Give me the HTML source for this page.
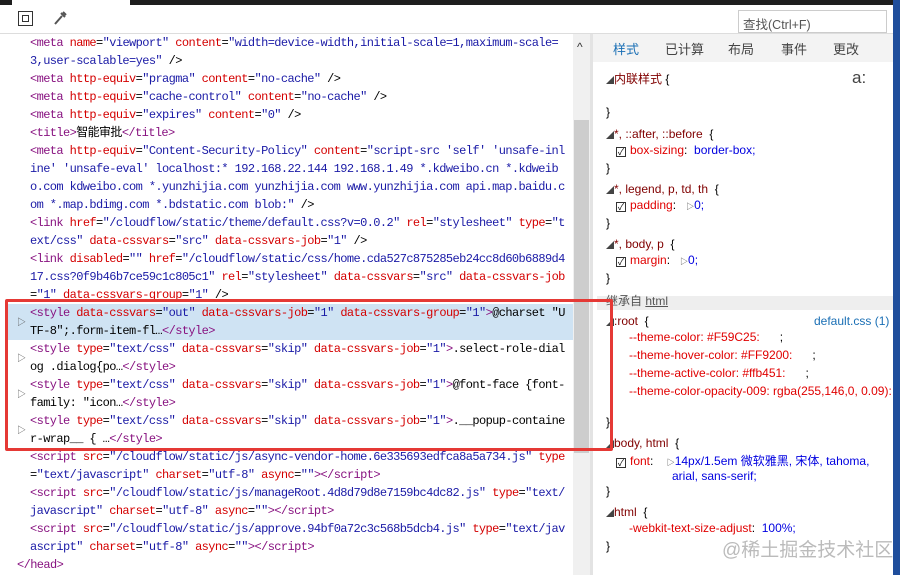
<!DOCTYPE html>
<html><head><meta charset="utf-8"><style>
*{margin:0;padding:0;box-sizing:border-box}
body{width:900px;height:575px;overflow:hidden;background:#fff;position:relative;font-family:"Liberation Sans","Noto Sans CJK SC",sans-serif}
.a{position:absolute;white-space:pre}
.code{font-family:"Liberation Mono","Noto Sans CJK SC",monospace;font-size:12px;letter-spacing:-0.6px;color:#000;line-height:18px}
.t{color:#881280}.n{color:#d40000}.v{color:#1a1aa6}
.r{font-size:12px;line-height:16px}
.sel{color:#800000}.p{color:#e00000}.pv{color:#0000e0}
.cb{display:inline-block;width:10px;height:10px;border:1px solid #333;vertical-align:-1px;margin-right:4px;font-size:9px;line-height:8px;text-align:center}
.tri{font-size:8px;color:#444}
</style></head><body>
<div class="a" style="left:0;top:0;width:900px;height:5px;background:#1e1e1e"></div>
<div class="a" style="left:12px;top:0;width:118px;height:5px;background:#fff"></div>
<div class="a" style="left:893px;top:0;width:7px;height:575px;background:#1f4e9c"></div>
<div class="a" style="left:18px;top:11px;width:15px;height:15px;border:1px solid #333"></div>
<div class="a" style="left:22px;top:15px;width:7px;height:7px;border:1px solid #333"></div>
<svg class="a" style="left:53px;top:10px" width="14" height="16"><path d="M2 14 L9 6 M8 3 L12 7 M10 2 L13 5" stroke="#555" stroke-width="2" fill="none"/></svg>
<div class="a" style="left:738px;top:10px;width:149px;height:23px;border:1px solid #ccc;font-size:12.5px;color:#555;padding:3px 4px">查找(Ctrl+F)</div>
<div class="a" style="left:0;top:33px;width:893px;height:1px;background:#ddd"></div>
<div class="a" style="left:573px;top:34px;width:17px;height:541px;background:#f0f0f0"></div>
<div class="a" style="left:574px;top:120px;width:15px;height:333px;background:#cdcdcd"></div>
<div class="a" style="left:577px;top:40px;font-size:12px;color:#333">^</div>
<div class="a" style="left:590px;top:34px;width:3px;height:541px;background:#e3e3e3"></div>
<div class="a" style="left:593px;top:34px;width:300px;height:28px;background:#f3f3f3"></div>
<div class="a r" style="left:613px;top:42px;font-size:13px;color:#1a6fb5">样式</div>
<div class="a r" style="left:665px;top:42px;font-size:13px;color:#444">已计算</div>
<div class="a r" style="left:728px;top:42px;font-size:13px;color:#444">布局</div>
<div class="a r" style="left:781px;top:42px;font-size:13px;color:#444">事件</div>
<div class="a r" style="left:833px;top:42px;font-size:13px;color:#444">更改</div>
<div class="a" style="left:852px;top:68px;font-size:17px;color:#444">a:</div>
<div class="a" style="left:597px;top:296px;width:296px;height:14px;background:#eee"></div>
<div class="a r" style="left:606px;top:293px;color:#555">继承自 <u>html</u></div>

<div class="a r" style="left:606px;top:71px"><span class="tri">◢</span><span class="sel">内联样式</span> {</div>
<div class="a r" style="left:606px;top:104px">}</div>
<div class="a r" style="left:606px;top:126px"><span class="tri">◢</span><span class="sel">*, ::after, ::before</span>  {</div>
<div class="a r" style="left:616px;top:142px"><span class="cb">✓</span><span class="p">box-sizing</span>:  <span class="pv">border-box;</span></div>
<div class="a r" style="left:606px;top:160px">}</div>
<div class="a r" style="left:606px;top:181px"><span class="tri">◢</span><span class="sel">*, legend, p, td, th</span>  {</div>
<div class="a r" style="left:616px;top:197px"><span class="cb">✓</span><span class="p">padding</span>:   <span class="tri">▷</span><span class="pv">0;</span></div>
<div class="a r" style="left:606px;top:215px">}</div>
<div class="a r" style="left:606px;top:236px"><span class="tri">◢</span><span class="sel">*, body, p</span>  {</div>
<div class="a r" style="left:616px;top:252px"><span class="cb">✓</span><span class="p">margin</span>:   <span class="tri">▷</span><span class="pv">0;</span></div>
<div class="a r" style="left:606px;top:270px">}</div>

<div class="a r" style="left:606px;top:313px"><span class="tri">◢</span><span class="sel">:root</span>  {</div>
<div class="a r" style="left:814px;top:313px;color:#1a6fb5">default.css (1)</div>
<div class="a r" style="left:629px;top:329px"><span class="p">--theme-color: #F59C25:</span>      ;</div>
<div class="a r" style="left:629px;top:347px"><span class="p">--theme-hover-color: #FF9200:</span>      ;</div>
<div class="a r" style="left:629px;top:365px"><span class="p">--theme-active-color: #ffb451:</span>      ;</div>
<div class="a r" style="left:629px;top:383px"><span class="p">--theme-color-opacity-009: rgba(255,146,0, 0.09):</span></div>
<div class="a r" style="left:606px;top:414px">}</div>
<div class="a r" style="left:606px;top:435px"><span class="tri">◢</span><span class="sel">body, html</span>  {</div>
<div class="a r" style="left:616px;top:453px"><span class="cb">✓</span><span class="p">font</span>:    <span class="tri">▷</span><span class="pv">14px/1.5em 微软雅黑, 宋体, tahoma,</span></div>
<div class="a r" style="left:672px;top:468px;color:#0000e0">arial, sans-serif;</div>
<div class="a r" style="left:606px;top:483px">}</div>
<div class="a r" style="left:606px;top:504px"><span class="tri">◢</span><span class="sel">html</span>  {</div>
<div class="a r" style="left:629px;top:520px"><span class="p">-webkit-text-size-adjust</span>:  <span class="pv">100%;</span></div>
<div class="a r" style="left:606px;top:538px">}</div>
<div class="a" style="left:722px;top:535px;font-size:19px;color:#bbb">@稀土掘金技术社区</div>

<div class="a" style="left:5px;top:304px;width:568px;height:36px;background:#cfe3f3"></div>
<div class="a code" style="left:30px;top:34px"><span class="t">&lt;meta</span> <span class="n">name</span>=<span class="v">"viewport"</span> <span class="n">content</span>=<span class="v">"width=device-width,initial-scale=1,maximum-scale=</span>
<span class="v">3,user-scalable=yes"</span> /&gt;
<span class="t">&lt;meta</span> <span class="n">http-equiv</span>=<span class="v">"pragma"</span> <span class="n">content</span>=<span class="v">"no-cache"</span> /&gt;
<span class="t">&lt;meta</span> <span class="n">http-equiv</span>=<span class="v">"cache-control"</span> <span class="n">content</span>=<span class="v">"no-cache"</span> /&gt;
<span class="t">&lt;meta</span> <span class="n">http-equiv</span>=<span class="v">"expires"</span> <span class="n">content</span>=<span class="v">"0"</span> /&gt;
<span class="t">&lt;title&gt;</span>智能审批<span class="t">&lt;/title&gt;</span>
<span class="t">&lt;meta</span> <span class="n">http-equiv</span>=<span class="v">"Content-Security-Policy"</span> <span class="n">content</span>=<span class="v">"script-src 'self' 'unsafe-inl</span>
<span class="v">ine' 'unsafe-eval' localhost:* 192.168.22.144 192.168.1.49 *.kdweibo.cn *.kdweib</span>
<span class="v">o.com kdweibo.com *.yunzhijia.com yunzhijia.com www.yunzhijia.com api.map.baidu.c</span>
<span class="v">om *.map.bdimg.com *.bdstatic.com blob:"</span> /&gt;
<span class="t">&lt;link</span> <span class="n">href</span>=<span class="v">"/cloudflow/static/theme/default.css?v=0.0.2"</span> <span class="n">rel</span>=<span class="v">"stylesheet"</span> <span class="n">type</span>=<span class="v">"t</span>
<span class="v">ext/css"</span> <span class="n">data-cssvars</span>=<span class="v">"src"</span> <span class="n">data-cssvars-job</span>=<span class="v">"1"</span> /&gt;
<span class="t">&lt;link</span> <span class="n">disabled</span>=<span class="v">""</span> <span class="n">href</span>=<span class="v">"/cloudflow/static/css/home.cda527c875285eb24cc8d60b6889d4</span>
<span class="v">17.css?0f9b46b7ce59c1c805c1"</span> <span class="n">rel</span>=<span class="v">"stylesheet"</span> <span class="n">data-cssvars</span>=<span class="v">"src"</span> <span class="n">data-cssvars-job</span>
=<span class="v">"1"</span> <span class="n">data-cssvars-group</span>=<span class="v">"1"</span> /&gt;
<span class="t">&lt;style</span> <span class="n">data-cssvars</span>=<span class="v">"out"</span> <span class="n">data-cssvars-job</span>=<span class="v">"1"</span> <span class="n">data-cssvars-group</span>=<span class="v">"1"</span><span class="t">&gt;</span>@charset "U
TF-8";.form-item-fl…<span class="t">&lt;/style&gt;</span>
<span class="t">&lt;style</span> <span class="n">type</span>=<span class="v">"text/css"</span> <span class="n">data-cssvars</span>=<span class="v">"skip"</span> <span class="n">data-cssvars-job</span>=<span class="v">"1"</span><span class="t">&gt;</span>.select-role-dial
og .dialog{po…<span class="t">&lt;/style&gt;</span>
<span class="t">&lt;style</span> <span class="n">type</span>=<span class="v">"text/css"</span> <span class="n">data-cssvars</span>=<span class="v">"skip"</span> <span class="n">data-cssvars-job</span>=<span class="v">"1"</span><span class="t">&gt;</span>@font-face {font-
family: "icon…<span class="t">&lt;/style&gt;</span>
<span class="t">&lt;style</span> <span class="n">type</span>=<span class="v">"text/css"</span> <span class="n">data-cssvars</span>=<span class="v">"skip"</span> <span class="n">data-cssvars-job</span>=<span class="v">"1"</span><span class="t">&gt;</span>.__popup-containe
r-wrap__ { …<span class="t">&lt;/style&gt;</span>
<span class="t">&lt;script</span> <span class="n">src</span>=<span class="v">"/cloudflow/static/js/async-vendor-home.6e335693edfca8a5a734.js"</span> <span class="n">type</span>
=<span class="v">"text/javascript"</span> <span class="n">charset</span>=<span class="v">"utf-8"</span> <span class="n">async</span>=<span class="v">""</span><span class="t">&gt;&lt;/script&gt;</span>
<span class="t">&lt;script</span> <span class="n">src</span>=<span class="v">"/cloudflow/static/js/manageRoot.4d8d79d8e7159bc4dc82.js"</span> <span class="n">type</span>=<span class="v">"text/</span>
<span class="v">javascript"</span> <span class="n">charset</span>=<span class="v">"utf-8"</span> <span class="n">async</span>=<span class="v">""</span><span class="t">&gt;&lt;/script&gt;</span>
<span class="t">&lt;script</span> <span class="n">src</span>=<span class="v">"/cloudflow/static/js/approve.94bf0a72c3c568b5dcb4.js"</span> <span class="n">type</span>=<span class="v">"text/jav</span>
<span class="v">ascript"</span> <span class="n">charset</span>=<span class="v">"utf-8"</span> <span class="n">async</span>=<span class="v">""</span><span class="t">&gt;&lt;/script&gt;</span></div>
<div class="a code" style="left:17px;top:556px"><span class="t">&lt;/head&gt;</span></div>
<div class="a" style="left:17px;top:304px;font-size:9px;color:#555;line-height:36px">▷<br>▷<br>▷<br>▷</div>
<div class="a" style="left:5px;top:299px;width:608px;height:152px;border:3px solid #e53935;border-radius:2px"></div>
</body></html>
